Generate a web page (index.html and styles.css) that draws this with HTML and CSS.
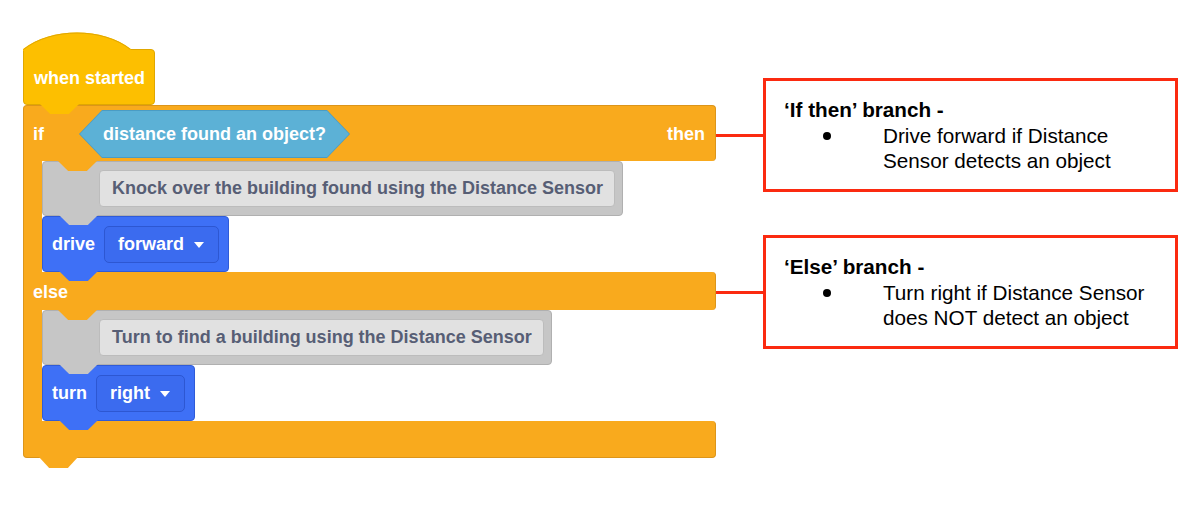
FILE: index.html
```html
<!DOCTYPE html>
<html lang="en">
<head>
    <meta charset="UTF-8">
    <meta name="viewport" content="width=device-width, initial-scale=1.0">
    <title>If then else - Distance Sensor</title>
    <link rel="stylesheet" href="styles.css">
</head>
<body>
    <div class="page">
        <!-- Block stack -->
        <div class="script">
            <div class="hat tab">
                <svg class="hat-dome" width="108" height="19" viewBox="0 0 108 19">
                    <path d="M0 19 L0 17 C28 -5 80 -5 108 17 L108 19 Z" fill="#fdbf00"/>
                    <path d="M0.5 17.5 C28 -4.5 80 -4.5 107.5 17.5" fill="none" stroke="#e0a700" stroke-width="1"/>
                </svg>
                <span class="label">when started</span>
            </div>

            <div class="if-block">
                <div class="c-row c-top tab">
                    <span class="label">if</span>
                    <div class="bool">
                        <div class="bool-fill">distance found an object?</div>
                    </div>
                    <span class="label then">then</span>
                </div>

                <div class="c-mouth">
                    <div class="c-arm"></div>
                    <div class="c-stack">
                        <div class="comment tab">
                            <div class="comment-field">Knock over the building found using the Distance Sensor</div>
                        </div>
                        <div class="stmt tab">
                            <span class="label">drive</span>
                            <div class="dropdown">forward<span class="caret"></span></div>
                        </div>
                    </div>
                </div>

                <div class="c-row c-else tab">
                    <span class="label">else</span>
                </div>

                <div class="c-mouth">
                    <div class="c-arm"></div>
                    <div class="c-stack">
                        <div class="comment tab">
                            <div class="comment-field">Turn to find a building using the Distance Sensor</div>
                        </div>
                        <div class="stmt tab">
                            <span class="label">turn</span>
                            <div class="dropdown">right<span class="caret"></span></div>
                        </div>
                    </div>
                </div>

                <div class="c-row c-bottom tab"></div>
            </div>
        </div>

        <!-- Notes -->
        <div class="notes">
            <div class="note">
                <div class="note-title">‘If then’ branch -</div>
                <ul>
                    <li>Drive forward if Distance Sensor detects an object</li>
                </ul>
            </div>
            <div class="note">
                <div class="note-title">‘Else’ branch -</div>
                <ul>
                    <li>Turn right if Distance Sensor does NOT detect an object</li>
                </ul>
            </div>
        </div>
    </div>
</body>
</html>
```

FILE: styles.css
```css
body {
    margin: 0;
    padding: 0;
    background: white;
    font-family: 'Liberation Sans', Arial, sans-serif;
}

.page {
    display: flex;
    align-items: flex-start;
    padding: 32px 0 40px 23px;
}

/* Blocks */
.script {
    width: 693px;
    display: flex;
    flex-direction: column;
    align-items: flex-start;
}

.label {
    color: white;
    font-size: 18px;
    font-weight: bold;
    white-space: nowrap;
}

.tab {
    position: relative;
}

/* notch under each block, same colour as the block */
.tab::after {
    content: '';
    position: absolute;
    left: 16px;
    bottom: -10px;
    width: 39px;
    height: 10px;
    clip-path: polygon(0 0, 100% 0, 74% 100%, 26% 100%);
    z-index: 2;
}

.hat {
    box-sizing: border-box;
    width: 132px;
    height: 56px;
    margin-top: 17px;
    padding: 3px 0 0 10px;
    display: flex;
    align-items: center;
    background-color: #fdbf00;
    border: 1px solid #e0a700;
    border-radius: 0 4px 4px 4px;
}

.hat.tab::after {
    background: #fdbf00;
}

.hat-dome {
    position: absolute;
    left: -1px;
    top: -18px;
}

.if-block {
    width: 693px;
    display: flex;
    flex-direction: column;
}

.c-row {
    box-sizing: border-box;
    display: flex;
    align-items: center;
    background-color: #f9aa1d;
    border-left: 1px solid #dc951a;
    border-right: 1px solid #dc951a;
    padding: 0 10px 0 9px;
}

.c-row.tab::after {
    background: #f9aa1d;
}

.c-top {
    height: 56px;
    padding-top: 1px;
    border-top: 1px solid #dc951a;
    border-radius: 4px 4px 4px 0;
}

.c-top.tab::after,
.c-else.tab::after {
    left: 34px;
}

.c-else {
    height: 38px;
    padding-top: 2px;
    border-radius: 0 4px 4px 0;
}

.c-bottom {
    height: 37px;
    border-bottom: 1px solid #dc951a;
    border-radius: 0 4px 4px 4px;
}

.c-bottom.tab::after {
    left: 15px;
    bottom: -11px;
    height: 11px;
}

.c-mouth {
    display: flex;
}

.c-arm {
    width: 19px;
    flex-shrink: 0;
    box-sizing: border-box;
    background: #f9aa1d;
    border-left: 1px solid #dc951a;
}

.c-stack {
    display: flex;
    flex-direction: column;
    align-items: flex-start;
}

.then {
    margin-left: auto;
}

.bool {
    margin-left: 35px;
    padding: 1px;
    background: #4a9cc4;
    clip-path: polygon(23px 0, calc(100% - 23px) 0, 100% 50%, calc(100% - 23px) 100%, 23px 100%, 0 50%);
}

.bool-fill {
    box-sizing: border-box;
    height: 46px;
    padding: 1px 23px 0 23px;
    display: flex;
    align-items: center;
    background: #5cb1d6;
    color: white;
    font-size: 18px;
    font-weight: bold;
    white-space: nowrap;
    clip-path: polygon(22px 0, calc(100% - 22px) 0, 100% 50%, calc(100% - 22px) 100%, 22px 100%, 0 50%);
}

.comment {
    box-sizing: border-box;
    height: 55px;
    padding: 0 7px 1px 56px;
    display: flex;
    align-items: center;
    background-color: #c6c6c6;
    border: 1px solid #b0b0b0;
    border-radius: 4px;
}

.comment.tab::after {
    background: #c6c6c6;
}

.comment-field {
    box-sizing: border-box;
    height: 37px;
    padding: 1px 11px 0 12px;
    display: flex;
    align-items: center;
    background: #e1e1e1;
    border: 1px solid #bcbcbc;
    border-radius: 4px;
    color: #575e75;
    font-size: 18px;
    font-weight: bold;
    white-space: nowrap;
}

.stmt {
    box-sizing: border-box;
    height: 56px;
    padding: 0 9px 0 9px;
    display: flex;
    align-items: center;
    gap: 9px;
    background-color: #3e70f6;
    border: 1px solid #2f5bd8;
    border-radius: 4px;
}

.stmt.tab::after {
    background: #3e70f6;
}

.dropdown {
    box-sizing: border-box;
    height: 37px;
    padding: 1px 14px 0 13px;
    display: flex;
    align-items: center;
    gap: 10px;
    background: #3b6bef;
    border: 1px solid #2d57d2;
    border-radius: 5px;
    color: white;
    font-size: 18px;
    font-weight: bold;
}

.caret {
    width: 0;
    height: 0;
    margin-top: 1px;
    border-left: 5.5px solid transparent;
    border-right: 5.5px solid transparent;
    border-top: 6px solid white;
}

/* Notes */
.notes {
    margin-left: 47px;
    padding-top: 46px;
    display: flex;
    flex-direction: column;
    gap: 43px;
}

.note {
    position: relative;
    box-sizing: border-box;
    width: 415px;
    height: 114px;
    padding: 16px 10px 0 18px;
    border: 3px solid #fb2a10;
    color: black;
    font-size: 20.7px;
    line-height: 25.5px;
}

.note::before {
    content: '';
    position: absolute;
    left: -50px;
    top: 53px;
    width: 47px;
    height: 3px;
    background: #fb2a10;
}

.note-title {
    font-weight: bold;
}

.note ul {
    margin: 0;
    padding-left: 99px;
    list-style: none;
}

.note li {
    position: relative;
}

.note li::before {
    content: '';
    position: absolute;
    left: -60px;
    top: 9px;
    width: 8px;
    height: 8px;
    border-radius: 50%;
    background: black;
}
```
